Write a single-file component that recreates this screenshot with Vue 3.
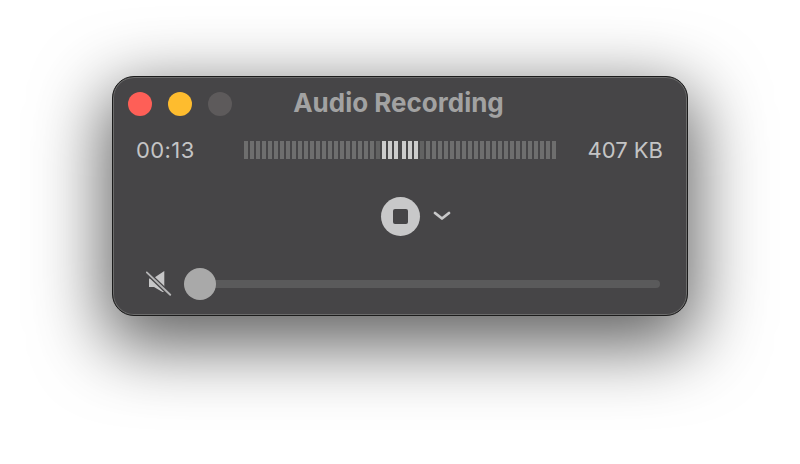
<template>
  <div class="page">
    <div class="window">
      <div class="titlebar">
        <div class="lights">
          <span class="light red"></span>
          <span class="light yellow"></span>
          <span class="light off"></span>
        </div>
        <div class="title">Audio Recording</div>
      </div>

      <div class="info">
        <span class="time">00:13</span>
        <div class="meter">
          <div class="channel">
            <span v-for="(level, i) in leftBars" :key="i" class="bar" :class="level"></span>
          </div>
          <div class="channel">
            <span v-for="(level, i) in rightBars" :key="i" class="bar" :class="level"></span>
          </div>
        </div>
        <span class="size">407 KB</span>
      </div>

      <div class="controls">
        <button type="button" class="stop"><span class="stop-square"></span></button>
        <svg class="chevron" width="18" height="10" viewBox="0 0 18 10">
          <path d="M2 2 L9 7.5 L16 2" fill="none" stroke="#c8c8c9" stroke-width="2.8" stroke-linecap="round" stroke-linejoin="round" />
        </svg>
      </div>

      <div class="volume">
        <svg class="mute" width="26" height="28" viewBox="0 0 26 28">
          <path d="M3 8.5 H7 L18.3 1 V22 H16.5 L8 17 H3 Z" fill="#c6c6c7" />
          <path d="M0.8 2.4 L24.2 24.8" stroke="#464547" stroke-width="4.4" />
          <path d="M0.8 2.4 L24.2 24.8" stroke="#b4b4b5" stroke-width="1.9" stroke-linecap="round" />
        </svg>
        <div class="slider">
          <div class="thumb"></div>
        </div>
      </div>
    </div>
  </div>
</template>

<script setup>
// 26 bars per channel, only the ones next to the middle are lit
const leftBars = Array.from({ length: 26 }, (_, i) => {
  if (i >= 23) return "lit";
  if (i === 22) return "dim";
  return "";
});

const rightBars = Array.from({ length: 26 }, (_, i) => {
  if (i <= 2) return "lit";
  if (i === 3) return "dim";
  return "";
});
</script>

<style>
html,
body {
  margin: 0;
  background: #fff;
}
</style>

<style scoped>
.page {
  width: 800px;
  height: 464px;
  overflow: hidden;
  padding-top: 76px;
  box-sizing: border-box;
  background: #fff;
  font-family: Inter, "Liberation Sans", sans-serif;
}

.window {
  width: 576px;
  height: 240px;
  margin-left: 112px;
  box-sizing: border-box;
  border: 1px solid #1c1c1c;
  border-radius: 22px;
  background: #464547;
  box-shadow: inset 0 0 0 1px #6c6c6c, 0 22px 70px 8px rgba(0, 0, 0, 0.62);
}

.titlebar {
  position: relative;
  height: 24px;
  margin-top: 15px;
  padding-left: 15px;
}

.lights {
  display: flex;
  gap: 16px;
}

.light {
  width: 24px;
  height: 24px;
  border-radius: 50%;
}

.red {
  background: #fe5f57;
}

.yellow {
  background: #febc2e;
}

.off {
  background: #5d5a5b;
}

.title {
  position: absolute;
  left: 0;
  right: 0;
  top: -1px;
  padding-right: 3px;
  text-align: center;
  font-size: 26px;
  line-height: 24px;
  font-weight: 700;
  color: #a2a2a2;
  white-space: nowrap;
}

.info {
  display: flex;
  align-items: center;
  height: 18px;
  margin-top: 25px;
  padding: 0 24px 0 23px;
  font-size: 22px;
  color: #c4c4c5;
  white-space: nowrap;
}

.time {
  width: 108px;
  letter-spacing: 0.4px;
}

.size {
  margin-left: auto;
}

.meter {
  display: flex;
  flex: none;
  gap: 4px;
}

.channel {
  display: flex;
  gap: 2px;
}

.bar {
  width: 4px;
  height: 18px;
  background: #6e6e6e;
}

.bar.lit {
  background: #cbcbcb;
}

.bar.dim {
  background: #626262;
}

.controls {
  position: relative;
  display: flex;
  justify-content: center;
  margin-top: 38px;
  padding-left: 1px;
}

.stop {
  display: flex;
  align-items: center;
  justify-content: center;
  width: 39px;
  height: 39px;
  padding: 0;
  border: none;
  border-radius: 50%;
  background: #c8c8c9;
}

.stop-square {
  width: 15px;
  height: 15px;
  border-radius: 2px;
  background: #464547;
}

.chevron {
  position: absolute;
  left: 320px;
  top: 14px;
}

.volume {
  display: flex;
  align-items: center;
  gap: 12px;
  height: 32px;
  margin-top: 32px;
  padding: 0 27px 0 33px;
}

.mute {
  flex: none;
}

.slider {
  position: relative;
  flex: 1;
  height: 8px;
  border-radius: 4px;
  background: #5a5a5b;
}

.thumb {
  position: absolute;
  left: 0;
  top: -12px;
  width: 32px;
  height: 32px;
  border-radius: 50%;
  background: #a9a9a9;
}
</style>
